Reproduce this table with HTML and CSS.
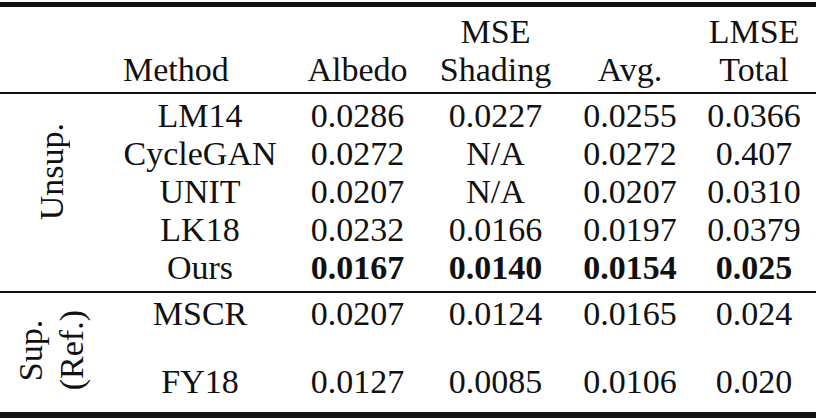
FILE: index.html
```html
<!DOCTYPE html>
<html lang="en">
<head>
<meta charset="utf-8">
<title>Intrinsic image decomposition results</title>
<link rel="stylesheet" href="styles.css">
</head>
<body>
<table class="results">
  <colgroup>
    <col class="c-group">
    <col class="c-method">
    <col class="c-albedo">
    <col class="c-shading">
    <col class="c-avg">
    <col class="c-total">
  </colgroup>
  <thead>
    <tr class="h1">
      <th></th><th></th><th></th><th>MSE</th><th></th><th>LMSE</th>
    </tr>
    <tr class="h2">
      <th></th><th class="method-h">Method</th><th>Albedo</th><th>Shading</th><th>Avg.</th><th>Total</th>
    </tr>
  </thead>
  <tbody class="unsup">
    <tr>
      <td rowspan="5" class="group group-unsup"><span class="rot">Unsup.</span></td>
      <td>LM14</td><td>0.0286</td><td>0.0227</td><td>0.0255</td><td>0.0366</td>
    </tr>
    <tr><td>CycleGAN</td><td>0.0272</td><td>N/A</td><td>0.0272</td><td>0.407</td></tr>
    <tr><td>UNIT</td><td>0.0207</td><td>N/A</td><td>0.0207</td><td>0.0310</td></tr>
    <tr><td>LK18</td><td>0.0232</td><td>0.0166</td><td>0.0197</td><td>0.0379</td></tr>
    <tr><td>Ours</td><td class="best">0.0167</td><td class="best">0.0140</td><td class="best">0.0154</td><td class="best">0.025</td></tr>
  </tbody>
  <tbody class="sup">
    <tr class="r-mscr">
      <td rowspan="2" class="group group-sup"><span class="rot">Sup.<br>(Ref.)</span></td>
      <td>MSCR</td><td>0.0207</td><td>0.0124</td><td>0.0165</td><td>0.024</td>
    </tr>
    <tr class="r-fy"><td>FY18</td><td>0.0127</td><td>0.0085</td><td>0.0106</td><td>0.020</td></tr>
  </tbody>
</table>
</body>
</html>
```
FILE: styles.css
```css
html, body {
  margin: 0;
  padding: 0;
  background: #ffffff;
}

body {
  color: #111111;
  font-family: "Liberation Serif", "Times New Roman", serif;
  font-size: 34px;
}

.results {
  border-collapse: separate;
  border-spacing: 0;
  margin-top: 2px;
  width: 816px;
  table-layout: fixed;
}

.c-group { width: 108px; }
.c-method { width: 184px; }
.c-albedo { width: 131px; }
.c-shading { width: 145px; }
.c-avg { width: 124px; }
.c-total { width: 124px; }

.results th,
.results td {
  padding: 0 15px;
  line-height: 38px;
  text-align: center;
  font-weight: normal;
  white-space: nowrap;
}

.results .method-h { text-align: left; }

.results .best { font-weight: bold; }

/* header rules */
.h1 th {
  border-top: 5px solid #111;
  padding-top: 6px;
}

.h2 th {
  border-bottom: 2px solid #111;
  padding-bottom: 3px;
}

/* unsupervised block */
.unsup tr:first-child td { padding-top: 3px; }

.unsup tr:last-child td {
  padding-bottom: 4px;
  border-bottom: 2px solid #111;
}

/* supervised block */
.sup .r-mscr td {
  padding-top: 2px;
  padding-bottom: 30px;
}

.sup .r-fy td {
  padding-bottom: 11px;
  border-bottom: 6px solid #111;
}

/* rotated group labels */
.results td.group {
  line-height: 0;
  vertical-align: middle;
  text-align: left;
}

.results td.group-unsup {
  padding: 0 0 45px 31px;
  border-bottom: 2px solid #111;
}

.results td.group-sup {
  padding: 0 0 5px 10px;
  border-bottom: 6px solid #111;
}

.rot {
  display: inline-block;
  vertical-align: middle;
  writing-mode: vertical-rl;
  transform: rotate(180deg);
  line-height: 41px;
  text-align: center;
}
```
